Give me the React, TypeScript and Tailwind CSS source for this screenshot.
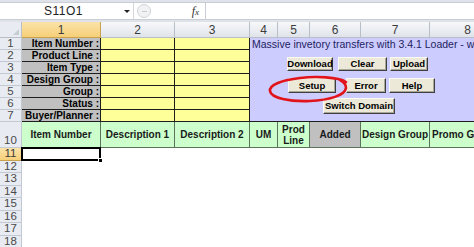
import React from 'react'

const colHeads = ['1', '2', '3', '4', '5', '6', '7', '8']

const labels = [
  'Item Number :',
  'Product Line :',
  'Item Type :',
  'Design Group :',
  'Group :',
  'Status :',
  'Buyer/Planner :',
]

const bodyRows = ['12', '13', '14', '15', '16', '17', '18']

const rowHead =
  'bg-[#e8ecf2] border-r border-b border-[#c3c9d2] text-[#4a4a4a] text-[11.5px] leading-none flex items-center justify-center overflow-hidden'

const colHead =
  'bg-gradient-to-b from-[#f7f8fa] to-[#e0e4ea] border-r border-b border-[#b9bfc8] text-[#3c3c3c] text-[12px] leading-none flex items-center justify-center'

function Btn({ label, w, ml = 0, h }: { label: string; w: number; ml?: number; h: number }) {
  return (
    <div
      className="bg-[#ece9d8] border border-t-[#fbfaf5] border-l-[#fbfaf5] border-r-[#3f3f3f] border-b-[#3f3f3f] shadow-[inset_-1px_-1px_0_#a9a69a] text-[9.5px] font-bold text-black leading-none flex items-center justify-center whitespace-nowrap"
      style={{ width: w, marginLeft: ml, height: h }}
    >
      {label}
    </div>
  )
}

export default function App() {
  return (
    <div className="w-[474px] h-[247px] overflow-hidden bg-white font-['Liberation_Sans',Arial,sans-serif] select-none">
      {/* Formula bar */}
      <div className="h-[22px] bg-[#dfe3e9] pt-[2px] pb-[2px]">
        <div className="h-[18px] flex bg-white border-y border-[#c9ced6]">
          <div className="w-[120px] flex items-center pl-[44px] text-[12px] text-[#222] tracking-[0.5px]">S11O1</div>
          <div className="w-[13px] flex items-center justify-center">
            <div className="w-0 h-0 border-l-[3px] border-r-[3px] border-t-[3px] border-l-transparent border-r-transparent border-t-[#222]" />
          </div>
          <div className="w-[72px] flex items-center bg-white border-l border-[#d3d7dd]">
            <div className="ml-[3px] w-[14px] h-[14px] rounded-full border border-[#cfd3d9] bg-[#f1f2f4] flex items-center justify-center">
              <div className="w-[5px] h-[1px] bg-[#c8ccd2]" />
            </div>
            <span className="ml-auto mr-[6px] text-[12px] italic font-['Liberation_Serif',serif] text-[#333]">
              f<span className="text-[9px]">x</span>
            </span>
          </div>
          <div className="flex-1 border-l border-[#c9ced6] bg-white" />
        </div>
      </div>

      {/* Sheet */}
      <div className="relative w-max grid grid-cols-[22px_79px_74px_75px_28px_32px_51px_69px_76px] grid-rows-[16px_repeat(7,12px)_26px_13px_12px_13px_12px_13px_12px_13px_12px]">
        {/* corner */}
        <div className="bg-[#e8ecf2] border-r border-b border-[#b9bfc8] relative">
          <div className="absolute right-[2px] bottom-[2px] w-0 h-0 border-l-[6px] border-b-[6px] border-l-transparent border-b-[#c6ccd4]" />
        </div>
        {colHeads.map((c, i) => (
          <div
            key={c}
            className={
              i === 0
                ? 'bg-gradient-to-b from-[#fbe3a8] to-[#f6cf78] border-r border-b border-[#c9a24f] text-[#3c3c3c] text-[12px] leading-none flex items-center justify-center'
                : colHead
            }
          >
            {c}
          </div>
        ))}

        {/* merged lavender block, cols 4-8, rows 1-7 */}
        <div className="col-start-5 col-span-5 row-start-2 row-span-7 relative bg-[#ccccff] border-b border-[#1e1e1e]">
          <div className="h-[12px] pl-[2px] text-[10.5px] leading-[12px] text-[#23235e] whitespace-nowrap overflow-hidden w-[224px]">
            Massive invetory transfers with 3.4.1 Loader - www.example-loader.com
          </div>
          <div className="flex pl-[37px] mt-[7px]">
            <Btn label="Download" w={46} h={14} />
            <Btn label="Clear" w={49} ml={5} h={14} />
            <Btn label="Upload" w={38} ml={3} h={14} />
          </div>
          <div className="flex pl-[38px] mt-[7px]">
            <Btn label="Setup" w={48} h={15} />
            <Btn label="Error" w={40} ml={10} h={15} />
            <Btn label="Help" w={46} ml={3} h={15} />
          </div>
          <div className="flex pl-[73px] mt-[5px]">
            <Btn label="Switch Domain" w={72} h={16} />
          </div>
          <svg className="absolute left-[16px] top-[35px] pointer-events-none" width="86" height="32" viewBox="0 0 86 32">
            <path
              d="M80 9 C 72 4, 50 3, 34 5 C 16 7, 3 12, 4 18 C 5 25, 24 29, 44 28 C 62 27, 79 23, 80 15 C 80 12, 78 9, 74 7"
              fill="none"
              stroke="#e2141b"
              strokeWidth="2.6"
              strokeLinecap="round"
            />
          </svg>
        </div>

        {/* rows 1-7 */}
        {labels.map((l, i) => (
          <React.Fragment key={l}>
            <div className={rowHead}>{i + 1}</div>
            <div className="bg-[#c0c0c0] border-r border-b border-[#1e1e1e] text-[10px] font-bold text-black leading-none flex items-center justify-end pr-[1px] whitespace-nowrap">
              {l}
            </div>
            <div className="bg-[#ffff99] border-r border-b border-[#1e1e1e]" />
            <div className="bg-[#ffff99] border-r border-b border-[#1e1e1e]" />
          </React.Fragment>
        ))}

        {/* row 10 headers */}
        <div className={rowHead + ' !items-end pb-[1px]'}>10</div>
        {[
          ['Item Number', 'bg-[#ccffcc]'],
          ['Description 1', 'bg-[#ccffcc]'],
          ['Description 2', 'bg-[#ccffcc]'],
          ['UM', 'bg-[#ccffcc]'],
          ['Prod Line', 'bg-[#ccffcc]'],
          ['Added', 'bg-[#c0c0c0]'],
          ['Design Group', 'bg-[#ccffcc]'],
          ['Promo Group', 'bg-[#ccffcc]'],
        ].map(([t, bg]) => (
          <div
            key={t}
            className={`${bg} border-r border-b border-[#5b735b] text-[10px] font-bold text-[#1a1a1a] leading-[11px] flex items-center justify-center text-center whitespace-nowrap overflow-hidden`}
          >
            {t === 'Prod Line' ? (
              <span>
                Prod
                <br />
                Line
              </span>
            ) : t === 'Promo Group' ? (
              <span className="w-full text-left pl-[2px]">{t}</span>
            ) : (
              t
            )}
          </div>
        ))}

        {/* row 11 with active cell */}
        <div className="bg-gradient-to-b from-[#fbe3a8] to-[#f6cf78] border-r border-b border-[#c9a24f] text-[#3c3c3c] text-[11.5px] leading-none flex items-center justify-center">
          11
        </div>
        <div className="relative border-2 border-black -ml-[1px] -mt-[1px]">
          <div className="absolute -right-[4px] -bottom-[4px] w-[5px] h-[5px] bg-black border border-white" />
        </div>
        <div className="col-span-7" />

        {bodyRows.map((r) => (
          <React.Fragment key={r}>
            <div className={rowHead}>{r}</div>
            <div className="col-span-8" />
          </React.Fragment>
        ))}
      </div>
    </div>
  )
}
